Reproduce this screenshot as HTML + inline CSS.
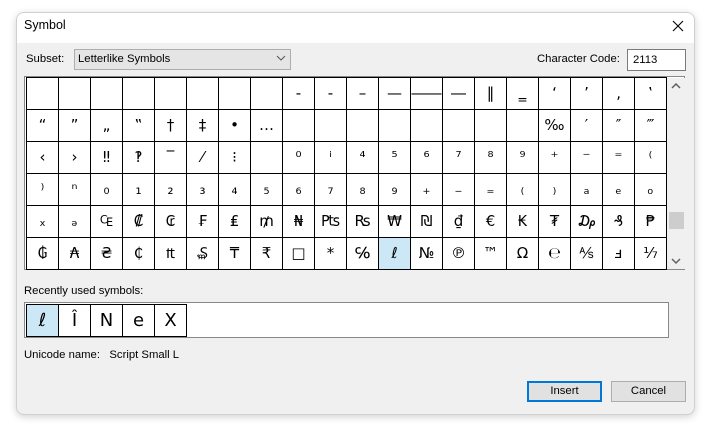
<!DOCTYPE html>
<html><head><meta charset="utf-8"><style>
body{margin:0;width:709px;height:433px;background:#fff;position:relative;overflow:hidden;font-family:"Liberation Sans","DejaVu Sans",sans-serif;font-size:11.3px;color:#000}
.dlg{position:absolute;left:16px;top:12px;width:677px;height:401px;border:1px solid #d0d0d0;border-radius:8px;background:#f0f0f0;box-shadow:0 2px 8px rgba(0,0,0,.18);overflow:hidden}
.tb{position:absolute;left:0;top:0;right:0;height:30px;background:#fff}
.a{position:absolute}
.grid{position:absolute;left:24px;top:76px;width:661px;height:194px;border:1px solid #888;background:#fff;box-sizing:border-box}
.c{position:absolute;width:33px;height:33px;box-sizing:border-box;border:1px solid #000;text-align:center;font-family:"DejaVu Sans","Liberation Sans",sans-serif;font-size:15px;line-height:31px}
.sel{background:#cce8f7}
.btn{position:absolute;width:75px;height:21px;box-sizing:border-box;border:1px solid #adadad;background:#e1e1e1;text-align:center;line-height:19px}
</style></head><body>
<div class="dlg"><div class="tb"></div></div>
<div class="a" style="left:24px;top:18px;font-size:12.5px">Symbol</div>
<svg class="a" style="left:672px;top:20px" width="12" height="12"><path d="M1 1L11 11M11 1L1 11" stroke="#000" stroke-width="1.1"/></svg>
<div class="a" style="left:26px;top:53px">Subset:</div>
<div class="a" style="left:74px;top:49px;width:217px;height:21px;box-sizing:border-box;border:1px solid #adadad;background:#e5e5e5;padding-left:3px;line-height:19px">Letterlike Symbols</div>
<svg class="a" style="left:276px;top:55px" width="10" height="7"><path d="M1 1L5 5L9 1" stroke="#555" fill="none"/></svg>
<div class="a" style="left:537px;top:53px">Character Code:</div>
<div class="a" style="left:627px;top:49px;width:59px;height:22px;box-sizing:border-box;border:1px solid #7a7a7a;background:#fff;padding-left:5px;line-height:20px">2113</div>
<div class="grid"></div>
<div id="g"></div>
<div class="a" style="left:667px;top:78px;width:18px;height:191px;background:#f0f0f0"></div>
<svg class="a" style="left:671px;top:83px" width="10" height="7"><path d="M1 5L5 1L9 5" stroke="#606060" fill="none" stroke-width="1.5"/></svg>
<svg class="a" style="left:671px;top:258px" width="10" height="7"><path d="M1 1L5 5L9 1" stroke="#606060" fill="none" stroke-width="1.5"/></svg>
<div class="a" style="left:669px;top:212px;width:15px;height:17px;background:#cdcdcd"></div>
<div class="a" style="left:24px;top:285px">Recently used symbols:</div>
<div class="a" style="left:24px;top:302px;width:645px;height:36px;box-sizing:border-box;border:1px solid #888;background:#fff"></div>
<div id="r"></div>
<div class="a" style="left:24px;top:349px">Unicode name:&nbsp;&nbsp; Script Small L</div>
<div class="btn" style="left:527px;top:381px;border:2px solid #0078d7;line-height:17px">Insert</div>
<div class="btn" style="left:611px;top:381px">Cancel</div>
<script>
var rows=[
["","","","","","","","","‐","‑","–","—","――","―","‖","‗","‘","’","‚","‛"],
["“","”","„","‟","†","‡","•","…","","","","","","","","","‰","′","″","‴"],
["‹","›","‼","‽","‾","⁄","⁝","","⁰","ⁱ","⁴","⁵","⁶","⁷","⁸","⁹","⁺","⁻","⁼","⁽"],
["⁾","ⁿ","₀","₁","₂","₃","₄","₅","₆","₇","₈","₉","₊","₋","₌","₍","₎","ₐ","ₑ","ₒ"],
["ₓ","ₔ","₠","₡","₢","₣","₤","₥","₦","₧","₨","₩","₪","₫","€","₭","₮","₯","₰","₱"],
["₲","₳","₴","₵","₶","₷","₸","₹","□","*","℅","ℓ","№","℗","™","Ω","℮","⅍","ⅎ","⅐"]];
var h="";
rows.forEach(function(r,i){r.forEach(function(s,j){
h+='<div class="c'+(i==5&&j==11?' sel':'')+'" style="left:'+(26+j*32)+'px;top:'+(77+i*32)+'px">'+s+'</div>';});});
document.getElementById("g").innerHTML=h;
var rr=["ℓ","Î","N","e","X"],k="";
rr.forEach(function(s,j){k+='<div class="c'+(j==0?' sel':'')+'" style="left:'+(26+j*32)+'px;top:304px;font-size:18px">'+s+'</div>';});
document.getElementById("r").innerHTML=k;
</script>
</body></html>
